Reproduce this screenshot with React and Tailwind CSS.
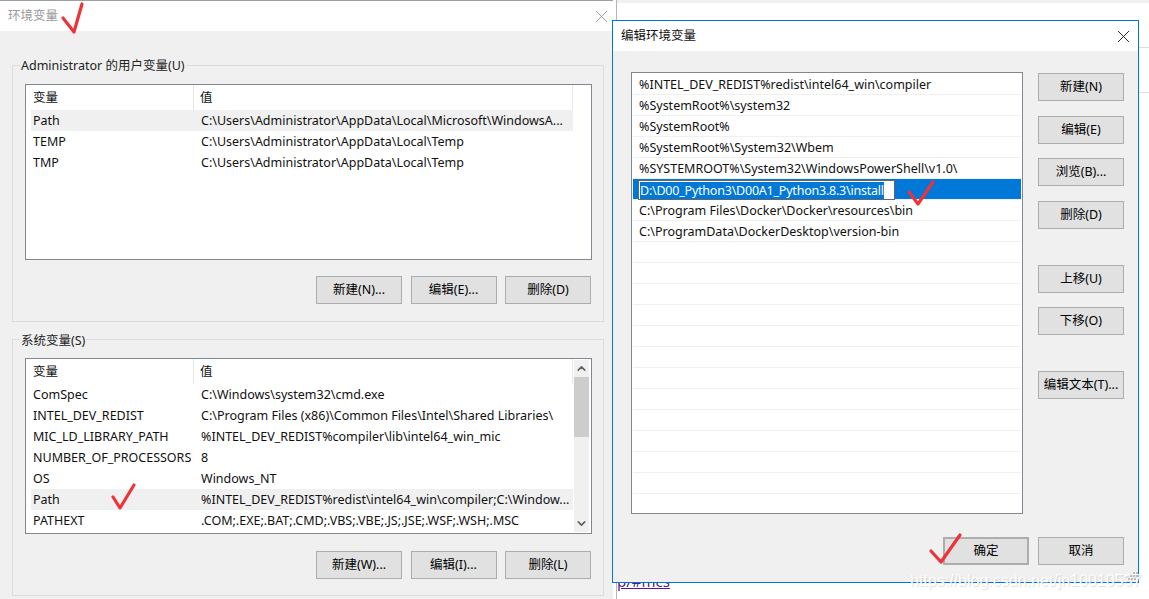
import React from 'react';
import { X, ChevronUp, ChevronDown } from 'lucide-react';

const FONT = '[font-family:"Noto_Sans","Noto_Sans_CJK_SC",sans-serif]';

const userVars = [
  ['Path', 'C:\\Users\\Administrator\\AppData\\Local\\Microsoft\\WindowsA...', true],
  ['TEMP', 'C:\\Users\\Administrator\\AppData\\Local\\Temp'],
  ['TMP', 'C:\\Users\\Administrator\\AppData\\Local\\Temp'],
];

const sysVars = [
  ['ComSpec', 'C:\\Windows\\system32\\cmd.exe'],
  ['INTEL_DEV_REDIST', 'C:\\Program Files (x86)\\Common Files\\Intel\\Shared Libraries\\'],
  ['MIC_LD_LIBRARY_PATH', '%INTEL_DEV_REDIST%compiler\\lib\\intel64_win_mic'],
  ['NUMBER_OF_PROCESSORS', '8'],
  ['OS', 'Windows_NT'],
  ['Path', '%INTEL_DEV_REDIST%redist\\intel64_win\\compiler;C:\\Window...', true],
  ['PATHEXT', '.COM;.EXE;.BAT;.CMD;.VBS;.VBE;.JS;.JSE;.WSF;.WSH;.MSC'],
];

const pathRows = [
  '%INTEL_DEV_REDIST%redist\\intel64_win\\compiler',
  '%SystemRoot%\\system32',
  '%SystemRoot%',
  '%SystemRoot%\\System32\\Wbem',
  '%SYSTEMROOT%\\System32\\WindowsPowerShell\\v1.0\\',
  null,
  'C:\\Program Files\\Docker\\Docker\\resources\\bin',
  'C:\\ProgramData\\DockerDesktop\\version-bin',
  ...Array(12).fill(''),
];

const WinButton = ({ children, className = '' }) => (
  <button className={`h-[28px] w-[86px] shrink-0 border border-[#adadad] bg-[#e1e1e1] text-center text-[12.5px] text-black ${className}`}>
    {children}
  </button>
);

const RedCheck = ({ className, d, box }) => (
  <svg className={`absolute ${className}`} viewBox={box} fill="none">
    <path d={d} stroke="#ee3338" strokeWidth="3.2" strokeLinecap="round" strokeLinejoin="round" />
  </svg>
);

const VarList = ({ rows, scroll }) => (
  <div className="flex h-[176px] border border-[#828790] bg-white">
    <div className="w-[547px] shrink-0 pl-[5px] text-[12.5px] text-[#111]">
      <div className="flex h-[25px] items-start border-r border-[#e8e8e8] bg-white">
        <div className="flex h-[25px] w-[163px] items-center border-r border-[#e5e5e5] pl-[2px] pt-[2px]">变量</div>
        <div className="flex h-[25px] items-center pl-[6px] pt-[2px]">值</div>
      </div>
      {rows.map(([name, value, active]) => (
        <div key={name} className={`flex h-[21px] items-center whitespace-nowrap pt-[1px] ${active ? 'bg-[#f0f0f0]' : ''}`}>
          <div className="w-[168px] shrink-0 overflow-hidden pl-[2px]">{name}</div>
          <div className="pl-[2px]">{value}</div>
        </div>
      ))}
    </div>
    {scroll && (
      <div className="my-[1px] ml-[1px] flex w-[15px] flex-col bg-[#f0f0f0]">
        <div className="flex h-[17px] items-center justify-center">
          <ChevronUp size={13} strokeWidth={3} color="#606060" />
        </div>
        <div className="h-[60px] bg-[#cdcdcd]" />
        <div className="flex-1" />
        <div className="flex h-[17px] items-center justify-center">
          <ChevronDown size={13} strokeWidth={3} color="#606060" />
        </div>
      </div>
    )}
  </div>
);

const VarGroup = ({ label, rows, scroll, buttons, buttonGap, labelTop }) => (
  <div className="relative h-[257px] border border-[#dcdcdc] pl-[12px] pr-[11px] pt-[18px]">
    <div className={`absolute left-[7px] bg-[#f0f0f0] px-[1px] text-[12.5px] leading-[18px] text-[#222] ${labelTop}`}>{label}</div>
    <VarList rows={rows} scroll={scroll} />
    <div className={`flex justify-end gap-[8.5px] pr-[1px] ${buttonGap}`}>
      {buttons.map((b) => (
        <WinButton key={b}>{b}</WinButton>
      ))}
    </div>
  </div>
);

export default function App() {
  return (
    <div className={`relative h-[599px] w-[1149px] overflow-hidden bg-white ${FONT}`}>
      {/* page behind the dialogs */}
      <div className="absolute left-[617px] right-0 top-0 h-[3px] bg-[#f0f0f0]" />
      <div className="absolute left-[616px] top-0 h-[599px] w-px bg-[#b5b5b5]" />
      <div className="absolute right-0 top-[47px] h-px w-[11px] bg-[#dedede]" />
      <div className="absolute right-0 top-[92px] h-px w-[11px] bg-[#dedede]" />
      <a className="absolute left-[617px] top-[570px] text-[15px] text-[#551a8b] underline">p/#mcs</a>

      {/* environment variables window */}
      <div className="absolute left-0 top-0 h-[599px] w-[613px] border-t border-[#a0a0a0] bg-[#f0f0f0]">
        <div className="flex h-[30px] items-center justify-between bg-white pl-[8px] pr-[1px] text-[12.5px] text-[#999]">
          <span>环境变量</span>
          <X size={21} strokeWidth={0.8} color="#777" />
        </div>
        <div className="flex w-[604px] flex-col gap-[17px] pl-[12px] pt-[34px]">
          <VarGroup
            label="Administrator 的用户变量(U)"
            rows={userVars}
            labelTop="top-[-9px]"
            buttonGap="mt-[16px]"
            buttons={['新建(N)...', '编辑(E)...', '删除(D)']}
          />
          <VarGroup
            label="系统变量(S)"
            rows={sysVars}
            labelTop="top-[-8px]"
            buttonGap="mt-[17px]"
            scroll
            buttons={['新建(W)...', '编辑(I)...', '删除(L)']}
          />
        </div>
      </div>

      {/* edit dialog */}
      <div className="absolute left-[612px] top-[20px] flex h-[563px] w-[527px] flex-col border border-[#0078d7] bg-[#f0f0f0]">
        <div className="flex h-[30px] items-center justify-between bg-white pl-[8px] pr-[4px] text-[12.5px] text-[#111]">
          <span>编辑环境变量</span>
          <X size={21} strokeWidth={1.1} color="#222" />
        </div>
        <div className="flex flex-1 pl-[18px] pt-[21px]">
          <div className="h-[442px] w-[392px] border border-[#828790] bg-white px-[1px] pt-[1px] text-[12.5px] text-[#111]">
            {pathRows.map((row, i) =>
              row === null ? (
                <div key={i} className="h-[21px] border-b border-[#f0f0f0]">
                  <div className="flex h-[20px] items-start bg-[#0078d7] pl-[5px]">
                    <div className="mt-[1px] flex h-[20px] w-[257px] items-center border border-[#666] bg-white pl-[1px]">
                      <span className="bg-[#0078d7] leading-[17px] tracking-[-0.22px] text-white">D:\D00_Python3\D00A1_Python3.8.3\install</span>
                    </div>
                  </div>
                </div>
              ) : (
                <div key={i} className="flex h-[21px] items-center whitespace-nowrap border-b border-[#f0f0f0] pl-[6px] pt-[3px]">
                  {row}
                </div>
              )
            )}
          </div>
          <div className="ml-[15px] mt-[1px] flex flex-col">
            <WinButton>新建(N)</WinButton>
            <WinButton className="mt-[15px]">编辑(E)</WinButton>
            <WinButton className="mt-[14px]">浏览(B)...</WinButton>
            <WinButton className="mt-[15px]">删除(D)</WinButton>
            <WinButton className="mt-[36px]">上移(U)</WinButton>
            <WinButton className="mt-[14px]">下移(O)</WinButton>
            <WinButton className="mt-[36px]">编辑文本(T)...</WinButton>
          </div>
        </div>
        <div className="flex justify-end gap-[9px] pb-[17px] pr-[14px]">
          <WinButton className="border-2 border-[#0078d7]">确定</WinButton>
          <WinButton>取消</WinButton>
        </div>
      </div>

      {/* red hand-drawn ticks */}
      <RedCheck className="left-[58px] top-0 h-[36px] w-[28px]" box="0 0 28 36" d="M5 18 L16 32 L24 4" />
      <RedCheck className="left-[108px] top-[480px] h-[32px] w-[30px]" box="0 0 30 32" d="M5 17 L12 28 L26 5" />
      <RedCheck className="left-[904px] top-[177px] h-[32px] w-[34px]" box="0 0 34 32" d="M5 15 L14 27 L29 5" />
      <RedCheck className="left-[926px] top-[530px] h-[38px] w-[38px]" box="0 0 38 38" d="M5 21 L15 32 L34 5" />

      {/* watermark */}
      <div className="absolute left-[910px] top-[572px] whitespace-nowrap text-[16px] leading-[18px] text-white [font-family:'Liberation_Sans',sans-serif] [text-shadow:1px_1px_1px_rgba(140,140,140,0.3)]">
        https://blog.csdn.net/jn10010537
      </div>
      <svg className="absolute left-[1128px] top-[572px] h-[10px] w-[10px]" viewBox="0 0 10 10" fill="#bdbdbd">
        <rect x="5" y="0" width="2" height="2" />
        <rect x="8" y="0" width="2" height="2" />
        <rect x="2" y="3" width="2" height="2" />
        <rect x="5" y="3" width="2" height="2" />
        <rect x="8" y="3" width="2" height="2" />
        <rect x="0" y="6" width="2" height="2" />
        <rect x="3" y="6" width="2" height="2" />
        <rect x="6" y="6" width="2" height="2" />
      </svg>
    </div>
  );
}
